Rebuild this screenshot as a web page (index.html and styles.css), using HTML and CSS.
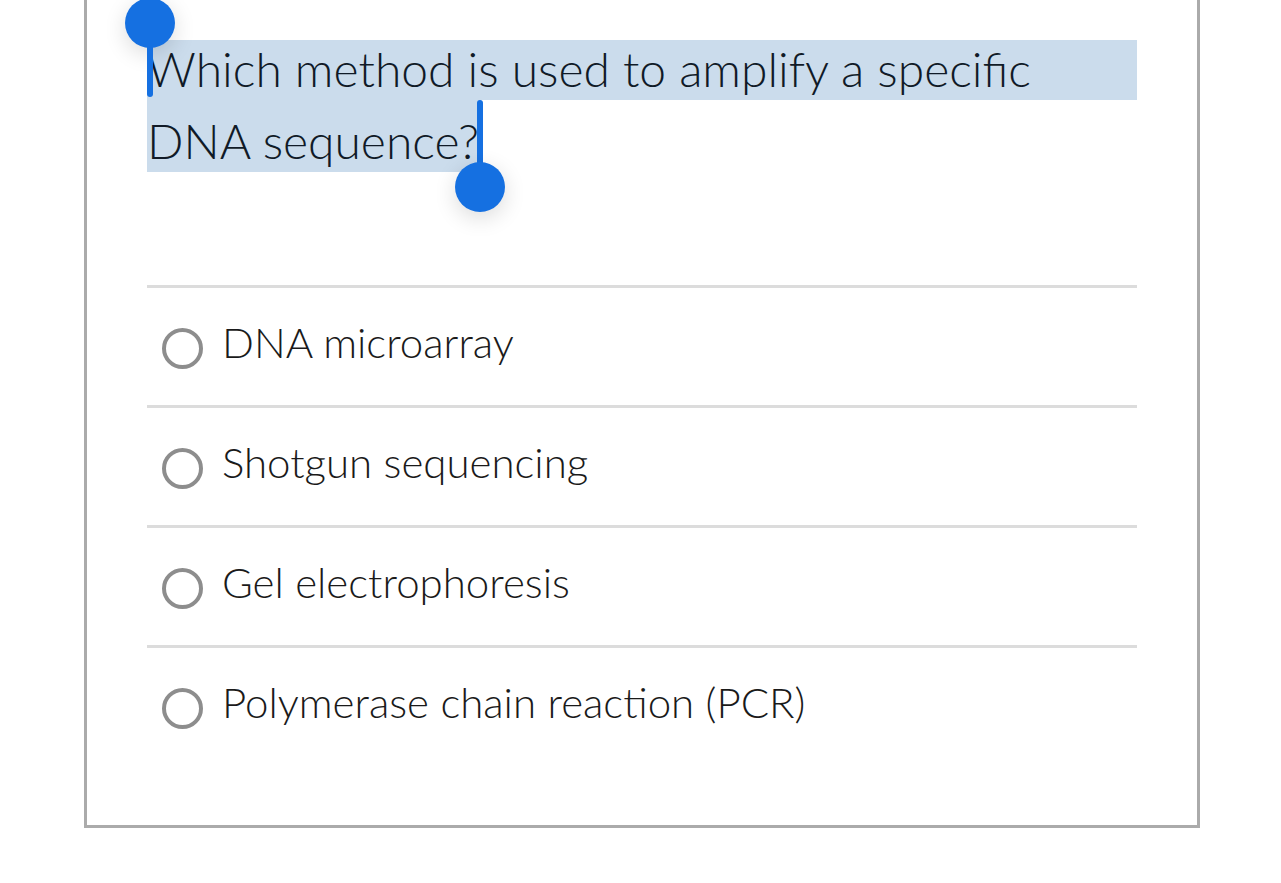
FILE: index.html
```html
<!DOCTYPE html>
<html lang="en">
<head>
<meta charset="utf-8">
<title>Question</title>
<link rel="stylesheet" href="styles.css">
</head>
<body>
<div class="card">
  <div class="question">
    <span class="q-line1">Which method is used to amplify a specific</span>
    <span class="q-line2">DNA sequence?</span>
  </div>
  <ul class="options">
    <li class="option"><span class="radio"></span><span class="label">DNA microarray</span></li>
    <li class="option"><span class="radio"></span><span class="label">Shotgun sequencing</span></li>
    <li class="option"><span class="radio"></span><span class="label">Gel electrophoresis</span></li>
    <li class="option"><span class="radio"></span><span class="label">Polymerase chain reaction (PCR)</span></li>
  </ul>
  <div class="handle handle-start"><span class="knob"></span><span class="bar"></span></div>
  <div class="handle handle-end"><span class="bar"></span><span class="knob"></span></div>
</div>
</body>
</html>
```
FILE: styles.css
```css
html, body {
  margin: 0;
  padding: 0;
  background: #ffffff;
}
body {
  font-family: "Lato Light", Lato, "Open Sans", "Liberation Sans", sans-serif;
  font-weight: 300;
  font-variant-ligatures: common-ligatures;
}
.card {
  position: relative;
  box-sizing: border-box;
  margin-left: 84px;
  width: 1116px;
  border: 3px solid #ababab;
  border-top: 0;
  padding: 40px 60px 60px;
}
.question {
  font-size: 48px;
  color: #101a27;
  margin-bottom: 113px;
}
.q-line1 {
  display: block;
  height: 60px;
  line-height: 58px;
  background: #cbdcec;
}
.q-line2 {
  display: inline-block;
  vertical-align: top;
  height: 72px;
  line-height: 82px;
  padding-right: 2px;
  background: #cbdcec;
}
.options {
  list-style: none;
  margin: 0;
  padding: 0;
}
.option {
  display: flex;
  align-items: center;
  gap: 19px;
  height: 117px;
  border-top: 3px solid #dcdcdc;
  padding-left: 15px;
}
.radio {
  flex: none;
  box-sizing: border-box;
  width: 41px;
  height: 41px;
  border: 4px solid #8d8d8d;
  border-radius: 50%;
  margin-top: 3px;
}
.label {
  font-size: 42px;
  color: #1a1a1a;
  padding-bottom: 10px;
}
.handle {
  position: absolute;
  display: flex;
  flex-direction: column;
  align-items: center;
  width: 50px;
}
.handle-start {
  left: 38px;
  top: -2px;
}
.handle-end {
  left: 368px;
  top: 100px;
}
.knob {
  width: 50px;
  height: 50px;
  border-radius: 50%;
  background: #1570e1;
  box-shadow: 0 6px 22px rgba(0, 0, 0, 0.14);
}
.bar {
  width: 6px;
  background: #1570e1;
}
.handle-start .bar {
  height: 52px;
  margin-top: -3px;
  border-radius: 0 0 3px 3px;
  margin-left: -1px;
}
.handle-end .bar {
  height: 66px;
  margin-bottom: -4px;
  border-radius: 3px 3px 0 0;
  margin-left: -1px;
}
```
